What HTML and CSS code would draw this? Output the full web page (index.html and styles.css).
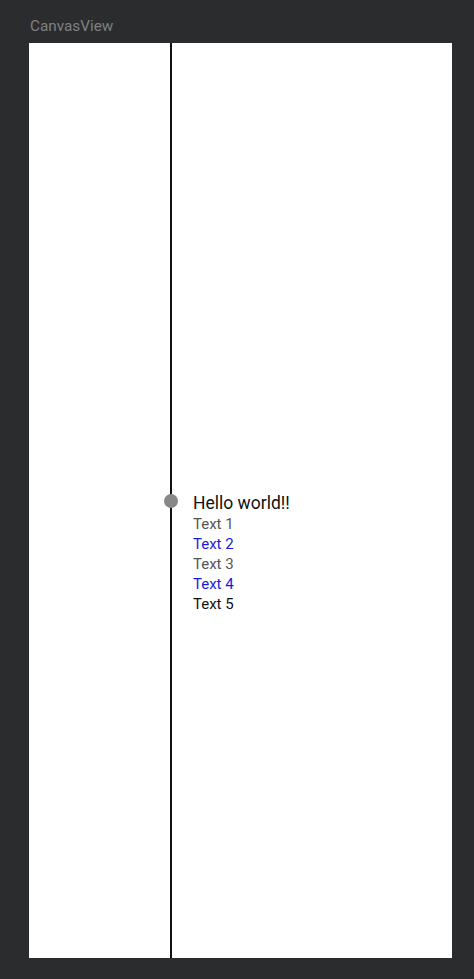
FILE: index.html
```html
<!DOCTYPE html>
<html>
<head>
<meta charset="utf-8">
<link rel="stylesheet" href="styles.css">
</head>
<body>
<div class="title">CanvasView</div>
<div class="canvas">
  <div class="line"></div>
  <div class="dot"></div>
  <div class="texts">
    <div class="hello">Hello world!!</div>
    <div class="t gray">Text 1</div>
    <div class="t blue">Text 2</div>
    <div class="t gray">Text 3</div>
    <div class="t blue">Text 4</div>
    <div class="t black">Text 5</div>
  </div>
</div>
</body>
</html>
```
FILE: styles.css
```css
html, body { margin: 0; padding: 0; }
body {
  background: #2b2c2e;
  width: 474px;
  height: 979px;
  font-family: Roboto, "Liberation Sans", sans-serif;
  padding: 0;
  overflow: hidden;
}
.title {
  color: #7f8082;
  font-size: 15.3px;
  line-height: 18px;
  padding: 17px 0 0 30px;
  height: 26px;
}
.canvas {
  position: relative;
  margin-left: 29px;
  width: 423px;
  height: 915px;
  background: #ffffff;
}
.line {
  position: absolute;
  left: 141px;
  top: 0;
  width: 2px;
  height: 100%;
  background: #111;
}
.dot {
  position: absolute;
  left: 135px;
  top: 451px;
  width: 14px;
  height: 14px;
  border-radius: 50%;
  background: #888;
}
.texts {
  position: absolute;
  left: 164px;
  top: 449px;
}
.hello {
  font-size: 17.5px;
  line-height: 22px;
  color: #111;
}
.t {
  font-size: 15px;
  line-height: 20px;
}
.gray { color: #555; }
.blue { color: #1a1adc; }
.black { color: #111; }
```
